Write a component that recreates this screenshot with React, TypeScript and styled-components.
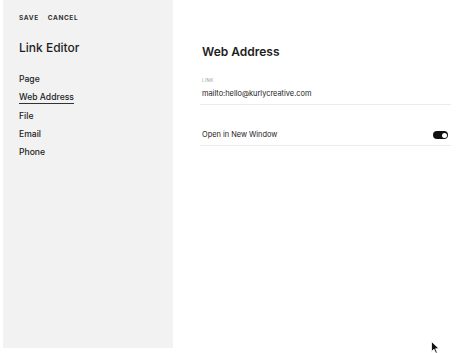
import React from "react";
import styled, { createGlobalStyle } from "styled-components";

const Global = createGlobalStyle`
  html, body { margin: 0; padding: 0; background: #ffffff; }
  body { font-family: "Inter", "Liberation Sans", Arial, sans-serif; color: #1f1f1f; }
  #root { width: 474px; height: 353px; }
`;

const Page = styled.div`
  position: relative;
  width: 474px;
  height: 353px;
  display: flex;
  overflow: hidden;
  background: #fff;
`;

const Sidebar = styled.aside`
  margin-left: 3px;
  width: 170px;
  height: 348px;
  background: #f2f2f2;
  padding: 14px 0 0 16px;
  box-sizing: border-box;
  display: flex;
  flex-direction: column;
`;

const Actions = styled.div`
  display: flex;
  gap: 9px;
`;

const ActionBtn = styled.span`
  font-size: 6.5px;
  font-weight: 700;
  letter-spacing: 0.6px;
  color: #333;
  text-transform: uppercase;
`;

const SideTitle = styled.h1`
  margin: 18px 0 0 0;
  font-size: 12px;
  font-weight: 500;
  color: #1e1e1e;
  line-height: 16px;
`;

const Nav = styled.nav`
  margin-top: 17px;
  display: flex;
  flex-direction: column;
  gap: 5.3px;
`;

const NavItem = styled.span<{ $active?: boolean }>`
  align-self: flex-start;
  font-size: 8.6px;
  font-weight: 500;
  color: #222;
  line-height: 12px;
  border-bottom: 1.5px solid ${(p) => (p.$active ? "#333" : "transparent")};
`;

const Main = styled.main`
  flex: 1;
  padding: 44px 23px 0 27px;
  box-sizing: border-box;
  display: flex;
  flex-direction: column;
`;

const MainTitle = styled.h2`
  margin: 0 0 0 2px;
  font-size: 12px;
  font-weight: 600;
  color: #1e1e1e;
  line-height: 16px;
`;

const Field = styled.div`
  margin-top: 18px;
  padding: 0 0 5px 2px;
  border-bottom: 1px solid #ececec;
  display: flex;
  flex-direction: column;
  gap: 5px;
`;

const FieldLabel = styled.span`
  font-size: 4.5px;
  letter-spacing: 0.4px;
  color: #999;
  text-transform: uppercase;
  line-height: 6px;
`;

const FieldValue = styled.span`
  font-size: 7.4px;
  color: #222;
  line-height: 10px;
`;

const Row = styled.div`
  margin-top: 25px;
  padding: 0 3px 5px 2px;
  border-bottom: 1px solid #ececec;
  display: flex;
  align-items: center;
  justify-content: space-between;
`;

const RowLabel = styled.span`
  font-size: 7.4px;
  color: #222;
  line-height: 10px;
`;

const Toggle = styled.span`
  position: relative;
  width: 15px;
  height: 8px;
  border-radius: 4px;
  background: #111;
  &::after {
    content: "";
    position: absolute;
    right: 1.5px;
    top: 1.5px;
    width: 5px;
    height: 5px;
    border-radius: 50%;
    background: #fff;
  }
`;

const Cursor = styled.svg`
  position: absolute;
  left: 431px;
  top: 341px;
`;

export default function App() {
  return (
    <>
      <Global />
      <Page>
        <Sidebar>
          <Actions>
            <ActionBtn>Save</ActionBtn>
            <ActionBtn>Cancel</ActionBtn>
          </Actions>
          <SideTitle>Link Editor</SideTitle>
          <Nav>
            <NavItem>Page</NavItem>
            <NavItem $active>Web Address</NavItem>
            <NavItem>File</NavItem>
            <NavItem>Email</NavItem>
            <NavItem>Phone</NavItem>
          </Nav>
        </Sidebar>
        <Main>
          <MainTitle>Web Address</MainTitle>
          <Field>
            <FieldLabel>Link</FieldLabel>
            <FieldValue>mailto:hello@kurlycreative.com</FieldValue>
          </Field>
          <Row>
            <RowLabel>Open in New Window</RowLabel>
            <Toggle />
          </Row>
        </Main>
        <Cursor width="9" height="13" viewBox="0 0 9 13">
          <path d="M0.5 0.5 L0.5 10.5 L3 8.2 L4.8 12.3 L6.3 11.6 L4.6 7.7 L8 7.7 Z" fill="#111" stroke="#fff" strokeWidth="0.8" />
        </Cursor>
      </Page>
    </>
  );
}
